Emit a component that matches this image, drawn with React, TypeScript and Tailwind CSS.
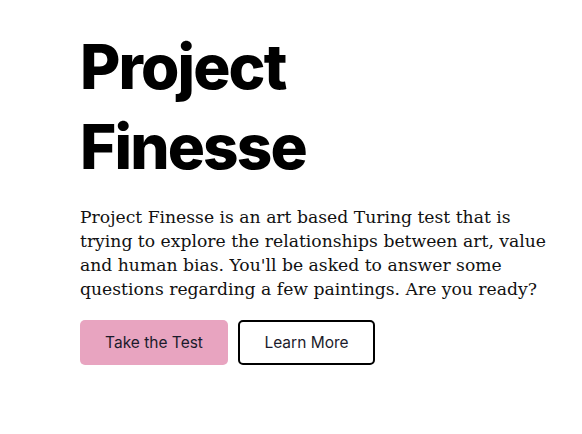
export default function App() {
  return (
    <div className="min-h-screen bg-white">
      <div className="pl-20 pt-[27px] pr-8">
        <h1 className="font-['Inter',sans-serif] text-[62px] font-extrabold leading-[80px] tracking-[-0.03em] text-black">
          Project
          <br />
          Finesse
        </h1>
        <p className="mt-[18px] whitespace-nowrap font-['DejaVu_Serif',serif] text-[17.2px] leading-[24px] text-[#111]">
          Project Finesse is an art based Turing test that is
          <br />
          trying to explore the relationships between art, value
          <br />
          and human bias. You'll be asked to answer some
          <br />
          questions regarding a few paintings. Are you ready?
        </p>
        <div className="mt-[19px] flex gap-[10px] font-['Inter',sans-serif] text-[15.5px]">
          <button className="h-[45px] w-[148px] rounded-[5px] bg-[#e8a4c0] text-[#1b1b2b]">Take the Test</button>
          <button className="h-[45px] w-[137px] rounded-[5px] border-2 border-black bg-white text-[#1b1b2b]">
            Learn More
          </button>
        </div>
      </div>
    </div>
  )
}
